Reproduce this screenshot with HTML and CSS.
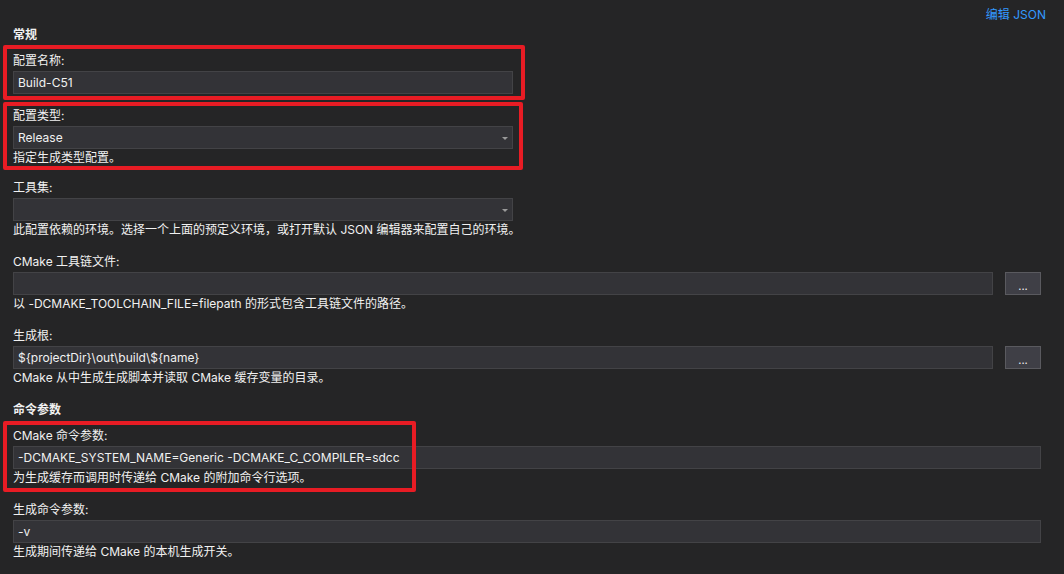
FILE: index.html
```html
<!DOCTYPE html>
<html lang="zh-CN">
<head>
  <meta charset="UTF-8" />
  <title>CMake 设置</title>
  <link rel="stylesheet" href="styles.css">
</head>
<body>
  <div class="topbar">
    <a class="jsonLink" href="#">编辑 JSON</a>
  </div>

  <main class="settings">
    <h2 class="groupTitle">常规</h2>

    <div class="field boxName">
      <label class="fieldLabel">配置名称:</label>
      <div class="textBox">Build-C51</div>
    </div>

    <div class="field near boxType">
      <label class="fieldLabel">配置类型:</label>
      <div class="textBox select">Release</div>
      <div class="hint">指定生成类型配置。</div>
    </div>

    <div class="field near">
      <label class="fieldLabel">工具集:</label>
      <div class="textBox select"></div>
      <div class="hint">此配置依赖的环境。选择一个上面的预定义环境，或打开默认 JSON 编辑器来配置自己的环境。</div>
    </div>

    <div class="field">
      <label class="fieldLabel">CMake 工具链文件:</label>
      <div class="pathRow">
        <div class="textBox wide"></div>
        <button class="browseBtn">...</button>
      </div>
      <div class="hint">以 -DCMAKE_TOOLCHAIN_FILE=filepath 的形式包含工具链文件的路径。</div>
    </div>

    <div class="field">
      <label class="fieldLabel">生成根:</label>
      <div class="pathRow">
        <div class="textBox wide">${projectDir}\out\build\${name}</div>
        <button class="browseBtn">...</button>
      </div>
      <div class="hint">CMake 从中生成生成脚本并读取 CMake 缓存变量的目录。</div>
    </div>

    <h2 class="groupTitle">命令参数</h2>

    <div class="field boxArgs">
      <label class="fieldLabel">CMake 命令参数:</label>
      <div class="textBox wide">-DCMAKE_SYSTEM_NAME=Generic -DCMAKE_C_COMPILER=sdcc</div>
      <div class="hint">为生成缓存而调用时传递给 CMake 的附加命令行选项。</div>
    </div>

    <div class="field">
      <label class="fieldLabel">生成命令参数:</label>
      <div class="textBox wide">-v</div>
      <div class="hint">生成期间传递给 CMake 的本机生成开关。</div>
    </div>
  </main>
</body>
</html>
```

FILE: styles.css
```css
*, *::before, *::after {
  box-sizing: border-box;
}
body {
  margin: 0;
  background: #252526;
  color: #f1f1f1;
  font-family: Inter, 'Noto Sans CJK SC', sans-serif;
  font-size: 12px;
  line-height: 16px;
  overflow: hidden;
}
.topbar {
  display: flex;
  justify-content: flex-end;
  padding: 7px 18px 0 0;
  height: 23px;
}
.jsonLink {
  color: #3399ff;
  text-decoration: none;
}
.settings {
  padding: 4px 23px 0 13px;
}
.groupTitle {
  margin: 16px 0 0;
  font-size: 12px;
  line-height: 16px;
  font-weight: bold;
}
.groupTitle:first-child {
  margin-top: 0;
}
.field {
  position: relative;
  margin-top: 16px;
}
.field.near {
  margin-top: 14px;
}
.groupTitle + .field {
  margin-top: 10px;
}
.fieldLabel {
  display: block;
}
.textBox {
  position: relative;
  height: 23px;
  margin-top: 2px;
  padding: 3px 4px 0;
  background: #333337;
  border: 1px solid #434346;
  color: #f1f1f1;
  white-space: nowrap;
}
.field > .textBox {
  width: 500px;
}
.field > .textBox.wide {
  width: 100%;
}
/* 下拉框的小三角 */
.select::after {
  content: "";
  position: absolute;
  right: 4px;
  top: 10px;
  border-left: 3px solid transparent;
  border-right: 3px solid transparent;
  border-top: 3px solid #9a9a9a;
}
.pathRow {
  display: flex;
  gap: 12px;
  margin-top: 2px;
}
.pathRow .textBox {
  flex: 1;
  margin-top: 0;
}
.browseBtn {
  width: 36px;
  height: 23px;
  padding: 4px 0 0;
  background: #3f3f46;
  border: 1px solid #5a5a5f;
  color: #f1f1f1;
  font: inherit;
  font-size: 11px;
  line-height: 12px;
}
.hint {
  margin-top: 1px;
}

/* 红色标注框 */
.boxName::after,
.boxType::after,
.boxArgs::after {
  content: "";
  position: absolute;
  left: -10px;
  border: 4px solid #e81c24;
  border-radius: 2px;
  pointer-events: none;
}
.boxName::after {
  top: -8px;
  bottom: -6px;
  width: 522px;
}
.boxType::after {
  top: -6px;
  bottom: -4px;
  width: 520px;
}
.boxArgs::after {
  top: -7px;
  bottom: -6px;
  width: 413px;
}
```
